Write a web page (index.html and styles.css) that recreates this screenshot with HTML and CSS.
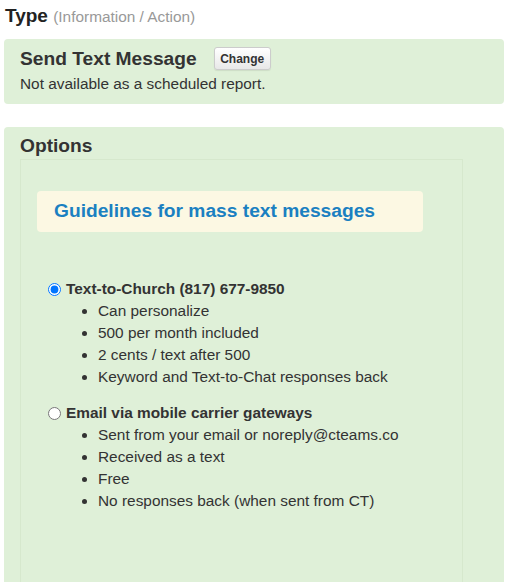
FILE: index.html
```html
<!DOCTYPE html>
<html>
<head>
<meta charset="utf-8">
<link rel="stylesheet" href="styles.css">
</head>
<body>
<div class="page">
  <h2 class="type-title">Type <span class="type-sub">(Information / Action)</span></h2>
  <div class="panel panel-type">
    <div class="type-row">
      <h3 class="type-name">Send Text Message</h3>
      <button class="btn" type="button">Change</button>
    </div>
    <div class="type-note">Not available as a scheduled report.</div>
  </div>

  <div class="panel panel-options">
    <h3 class="options-title">Options</h3>
    <div class="options-box">
      <div class="guidelines"><a class="guidelines-link" href="#">Guidelines for mass text messages</a></div>

      <div class="option">
        <label class="option-label"><input type="radio" name="method" checked> Text-to-Church (817) 677-9850</label>
        <ul class="option-list">
          <li>Can personalize</li>
          <li>500 per month included</li>
          <li>2 cents / text after 500</li>
          <li>Keyword and Text-to-Chat responses back</li>
        </ul>
      </div>

      <div class="option">
        <label class="option-label"><input type="radio" name="method"> Email via mobile carrier gateways</label>
        <ul class="option-list">
          <li>Sent from your email or noreply@cteams.co</li>
          <li>Received as a text</li>
          <li>Free</li>
          <li>No responses back (when sent from CT)</li>
        </ul>
      </div>
    </div>
  </div>
</div>
</body>
</html>
```

FILE: styles.css
```css
html, body {
  margin: 0;
  padding: 0;
  background: #fff;
}
body {
  font-family: "Liberation Sans", Arial, sans-serif;
  font-size: 15.4px;
  color: #333;
}
.page {
  width: 500px;
  padding: 4px 0 0 4px;
}
.type-title {
  margin: 0 0 0 1px;
  font-size: 19px;
  line-height: 24px;
  font-weight: bold;
  color: #222;
}
.type-sub {
  font-size: 15.4px;
  font-weight: normal;
  color: #999;
}
.panel {
  background: #dff0d8;
  border-radius: 4px;
}
.panel-type {
  margin-top: 10px;
  padding: 7px 16px 9px 16px;
}
.type-row {
  display: flex;
  align-items: center;
  height: 25px;
}
.type-name {
  margin: 0;
  font-size: 19.2px;
  line-height: 22px;
  font-weight: bold;
  color: #333;
}
.btn {
  margin-left: 17px;
  height: 23px;
  width: 57px;
  padding: 0;
  font-family: "Liberation Sans", Arial, sans-serif;
  font-size: 12px;
  font-weight: bold;
  color: #333;
  background: linear-gradient(#ffffff, #e8e8e8);
  border: 1px solid #ccc;
  border-radius: 3px;
  box-shadow: 0 1px 1px rgba(0,0,0,0.08);
}
.type-note {
  line-height: 22px;
  padding-top: 2px;
}
.panel-options {
  margin-top: 23px;
  padding: 8px 0 0 16px;
}
.options-title {
  margin: 0 0 2px 0;
  font-size: 19.2px;
  line-height: 22px;
  font-weight: bold;
  color: #333;
}
.options-box {
  width: 409px;
  border: 1px solid #d6e8cd;
  border-bottom: none;
  padding: 31px 16px 80px 16px;
}
.guidelines {
  width: 369px;
  height: 41px;
  padding-left: 17px;
  background: #fcf8e3;
  border-radius: 4px;
  display: flex;
  align-items: center;
  margin-bottom: 46px;
}
.guidelines-link {
  font-size: 19.2px;
  line-height: 22px;
  margin-top: -1px;
  font-weight: bold;
  color: #1a80c1;
  text-decoration: none;
}
.option {
  margin-bottom: 14px;
}
.option-label {
  display: flex;
  align-items: center;
  height: 22px;
  padding-left: 11px;
  font-weight: bold;
  color: #333;
}
.option-label input {
  width: 13px;
  height: 13px;
  margin: 0 5px 0 0;
}
.option-list {
  margin: 0;
  padding-left: 61px;
}
.option-list li {
  line-height: 22px;
}
```
